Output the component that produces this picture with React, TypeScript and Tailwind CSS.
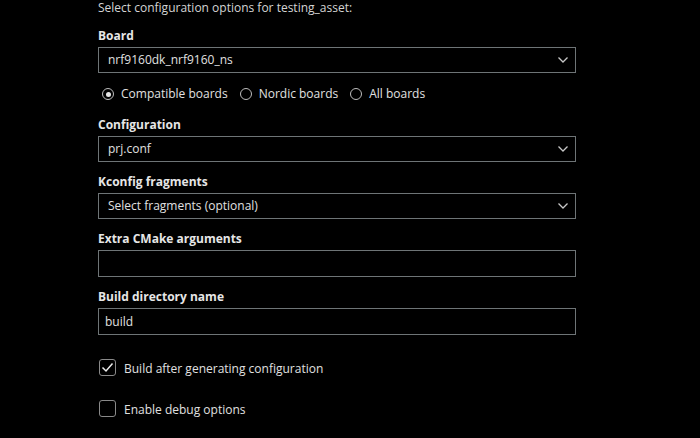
import React from 'react'

const font = { fontFamily: '"Open Sans", "Noto Sans", sans-serif' }

function Chevron() {
    return (
        <svg width="12" height="8" viewBox="0 0 12 8" className="text-[#c8c8c8]">
            <path d="M1.5 1.5 L6 6 L10.5 1.5" fill="none" stroke="currentColor" strokeWidth="1.3" />
        </svg>
    )
}

function Label({ children }: { children: React.ReactNode }) {
    return <div className="h-[20px] leading-[20px] mb-[1px] text-[12px] font-bold text-[#e6e6e6]">{children}</div>
}

function Select({ value }: { value: string }) {
    return (
        <div className="flex h-[26px] w-[478px] items-center justify-between border border-[#6e7476] bg-black pl-[9px] pr-[6px] text-[12px] text-[#e0e0e0]">
            <span>{value}</span>
            <Chevron />
        </div>
    )
}

function Input({ value }: { value?: string }) {
    return (
        <div className="flex h-[27px] w-[478px] items-center border border-[#6e7476] bg-black pl-[6px] text-[12px] text-[#e0e0e0]">
            {value}
        </div>
    )
}

function Radio({ checked, label }: { checked?: boolean, label: string }) {
    return (
        <div className="flex items-center gap-[7px]">
            <div className="flex size-[12px] items-center justify-center rounded-full border border-[#bdbdbd]">
                {checked && <div className="size-[5px] rounded-full bg-[#e6e6e6]"></div>}
            </div>
            <span>{label}</span>
        </div>
    )
}

function Checkbox({ checked, label }: { checked?: boolean, label: string }) {
    return (
        <div className="flex h-[17px] items-center gap-[8px] text-[12px] text-[#e0e0e0]">
            <div className="flex size-[17px] items-center justify-center rounded-[3px] border border-[#8a8a8a]">
                {checked && (
                    <svg width="13" height="11" viewBox="0 0 13 11">
                        <path d="M1.5 5.5 L5 9 L11.5 1.5" fill="none" stroke="#ececec" strokeWidth="1.5" />
                    </svg>
                )}
            </div>
            <span className="pt-[2px]">{label}</span>
        </div>
    )
}

export default function App() {
    return (
        <div className="h-[438px] w-[700px] overflow-hidden bg-black pl-[98px]" style={font}>
            <div className="h-[16px] leading-[16px] text-[12px] text-[#d4d4d4]">Select configuration options for testing_asset:</div>
            <div className="mt-[10px]">
                <Label>Board</Label>
                <Select value="nrf9160dk_nrf9160_ns" />
            </div>
            <div className="mt-[12px] flex h-[18px] items-center gap-[12px] pl-[4px] text-[12px] text-[#e0e0e0]">
                <Radio checked label="Compatible boards" />
                <Radio label="Nordic boards" />
                <Radio label="All boards" />
            </div>
            <div className="mt-[12px]">
                <Label>Configuration</Label>
                <Select value="prj.conf" />
            </div>
            <div className="mt-[10px]">
                <Label>Kconfig fragments</Label>
                <Select value="Select fragments (optional)" />
            </div>
            <div className="mt-[10px]">
                <Label>Extra CMake arguments</Label>
                <Input />
            </div>
            <div className="mt-[10px]">
                <Label>Build directory name</Label>
                <Input value="build" />
            </div>
            <div className="mt-[24px] pl-[1px]">
                <Checkbox checked label="Build after generating configuration" />
            </div>
            <div className="mt-[24px] pl-[1px]">
                <Checkbox label="Enable debug options" />
            </div>
        </div>
    )
}
